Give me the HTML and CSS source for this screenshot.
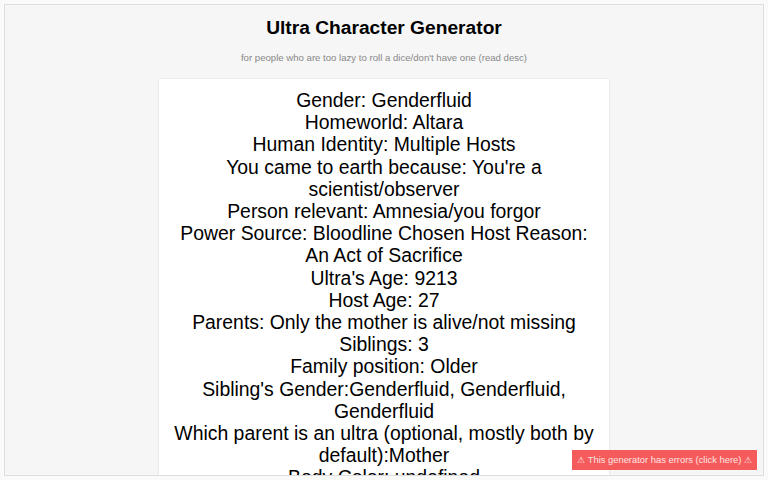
FILE: index.html
```html
<!DOCTYPE html>
<html>
<head>
    <title>Ultra Character Generator</title>
    <link rel="stylesheet" href="styles.css">
</head>
<body>
    <div class="frame">
        <h1>Ultra Character Generator</h1>
        <p class="desc">for people who are too lazy to roll a dice/don't have one (read desc)</p>

        <div class="output">
            Gender: Genderfluid<br>
            Homeworld: Altara<br>
            Human Identity: Multiple Hosts<br>
            You came to earth because: You're a scientist/observer<br>
            Person relevant: Amnesia/you forgor<br>
            Power Source: Bloodline Chosen Host Reason: An Act of Sacrifice<br>
            Ultra's Age: 9213<br>
            Host Age: 27<br>
            Parents: Only the mother is alive/not missing<br>
            Siblings: 3<br>
            Family position: Older<br>
            Sibling's Gender:Genderfluid, Genderfluid, Genderfluid<br>
            Which parent is an ultra (optional, mostly both by default):Mother<br>
            Body Color: undefined<br>
            Eye Color: undefined<br>
            Powers: undefined
        </div>
    </div>

    <div class="error-notice">&#9888; This generator has errors (click here) &#9888;</div>
</body>
</html>
```

FILE: styles.css
```css
html, body {
    margin: 0;
    padding: 0;
    background: #fafafa;
    font-family: "Liberation Sans", Arial, sans-serif;
    color: #000;
}

.frame {
    margin: 4px 4px 0 4px;
    height: 470px;
    border: 1px solid #dedede;
    background: #f6f6f6;
    overflow: hidden;
    text-align: center;
}

h1 {
    margin: 12px 0 0;
    font-size: 19.2px;
    line-height: 22px;
    font-weight: bold;
}

.desc {
    margin: 13px 0 0;
    font-size: 9.6px;
    line-height: 12px;
    color: #888;
}

.output {
    width: 430px;
    margin: 15px auto 0;
    padding: 10px;
    background: #fff;
    box-shadow: 0 0 2px rgba(0,0,0,0.12);
    font-size: 19.4px;
    line-height: 22.2px;
}

.error-notice {
    position: fixed;
    right: 11px;
    bottom: 10px;
    padding: 0 5px;
    height: 20px;
    line-height: 20px;
    background: #f55b5b;
    color: #ffe4e4;
    font-size: 9.4px;
    cursor: pointer;
}
```
